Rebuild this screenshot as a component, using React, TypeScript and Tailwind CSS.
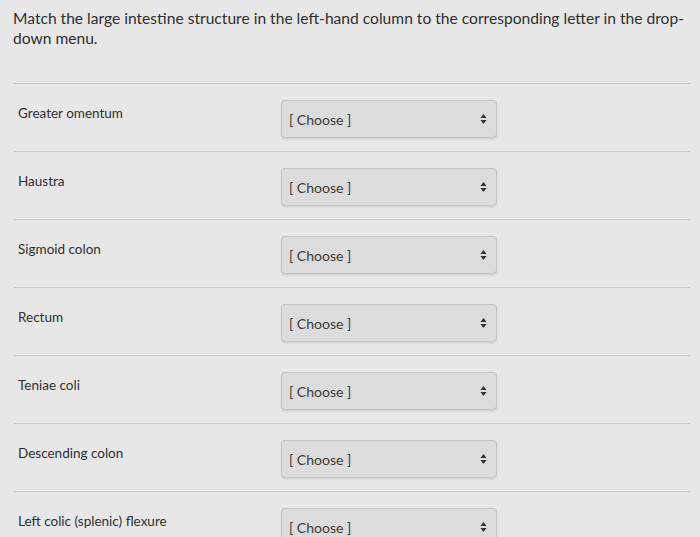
const items = [
  "Greater omentum",
  "Haustra",
  "Sigmoid colon",
  "Rectum",
  "Teniae coli",
  "Descending colon",
  "Left colic (splenic) flexure",
];

function SortArrows() {
  return (
    <svg width="7" height="12" viewBox="0 0 7 12" className="text-[#333]">
      <path d="M3.5 1 L6.5 5 L0.5 5 Z" fill="currentColor" />
      <path d="M3.5 11 L6.5 7 L0.5 7 Z" fill="currentColor" />
    </svg>
  );
}

function ChooseBox() {
  return (
    <div className="flex h-[38px] w-[216px] items-center justify-between rounded-[4px] border border-[#c4c4c4] bg-[#dcdcdc] pl-[7px] pr-[9px] shadow-[0_1px_2px_rgba(0,0,0,0.12)]">
      <span className="text-[14px] text-[#3a3a3a]">[ Choose ]</span>
      <SortArrows />
    </div>
  );
}

export default function App() {
  return (
    <div
      className="h-[537px] w-[700px] overflow-hidden bg-[#e7e7e7] text-[#333]"
      style={{ fontFamily: "Lato, 'Open Sans', sans-serif" }}
    >
      <p className="pl-[13px] pr-[2px] pt-[8px] text-[15.6px] leading-[20px] text-[#2f2f2f]">
        Match the large intestine structure in the left-hand column to the corresponding letter in the drop-
        <br />
        down menu.
      </p>

      <div className="mt-[35px] ml-[14px] mr-[10px] border-t border-[#c9c9c9]">
        {items.map((name) => (
          <div
            key={name}
            className="flex h-[68px] items-start border-b border-[#cbcbcb] pt-[16px]"
          >
            <div className="w-[267px] pl-[4px] pt-[3px] text-[13.5px] text-[#2f2f2f]">{name}</div>
            <ChooseBox />
          </div>
        ))}
      </div>
    </div>
  );
}
